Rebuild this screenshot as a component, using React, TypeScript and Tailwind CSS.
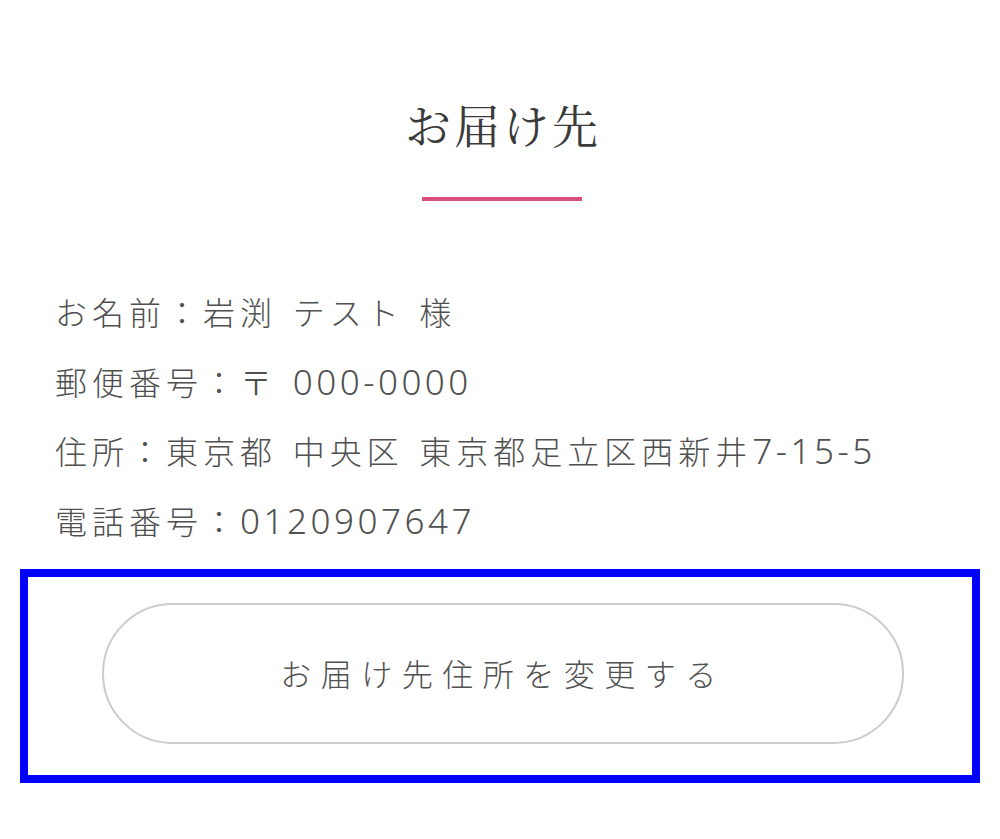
type Part = { t: string; latin?: boolean }

// each row split so that the Latin digits get their own (larger) face, as in the original
const rows: Part[][] = [
  [{ t: "お名前：岩渕\u2004テスト\u2004様" }],
  [{ t: "郵便番号：〒\u2004" }, { t: "000-0000", latin: true }],
  [{ t: "住所：東京都\u2004中央区\u2004東京都足立区西新井" }, { t: "7-15-5", latin: true }],
  [{ t: "電話番号：" }, { t: "0120907647", latin: true }],
]

export default function App() {
  return (
    <div
      className="min-h-screen bg-white text-[#505050]"
      style={{ fontFamily: '"Noto Sans CJK JP", "Noto Sans", sans-serif' }}
    >
      <div className="pt-[89px]">
        {/* Title */}
        <h2
          className="pl-[6px] text-center text-[46px] leading-[68px] tracking-[3px] text-[#3a3a3a]"
          style={{ fontFamily: '"Noto Serif CJK JP", "Noto Sans CJK JP", serif' }}
        >
          お届け先
        </h2>
        <div className="mx-auto mt-[40px] h-[4px] w-[160px] translate-x-[2px] bg-[#d94f7e]" />

        {/* Address info */}
        <ul className="mt-[76px] px-[55px]">
          {rows.map((row, i) => (
            <li key={i} className="text-[32px] font-light leading-[69.5px] tracking-[5px] whitespace-nowrap">
              {row.map((p, j) =>
                p.latin ? (
                  <span
                    key={j}
                    className="text-[35px] tracking-[3.5px]"
                    style={{ fontFamily: '"Noto Sans", "Noto Sans CJK JP", sans-serif' }}
                  >
                    {p.t}
                  </span>
                ) : (
                  <span key={j}>{p.t}</span>
                )
              )}
            </li>
          ))}
        </ul>

        {/* Change button */}
        <div className="mx-[20px] mt-[14px] border-[8px] border-[#0000ff] pt-[26px] pb-[31px]">
          <button className="mx-auto flex h-[141px] w-[802px] translate-x-[3px] items-center justify-center rounded-full border-2 border-[#cccccc] bg-white text-[31px] font-light tracking-[9.5px] text-[#505050]">
            お届け先住所を変更する
          </button>
        </div>
      </div>
    </div>
  )
}
